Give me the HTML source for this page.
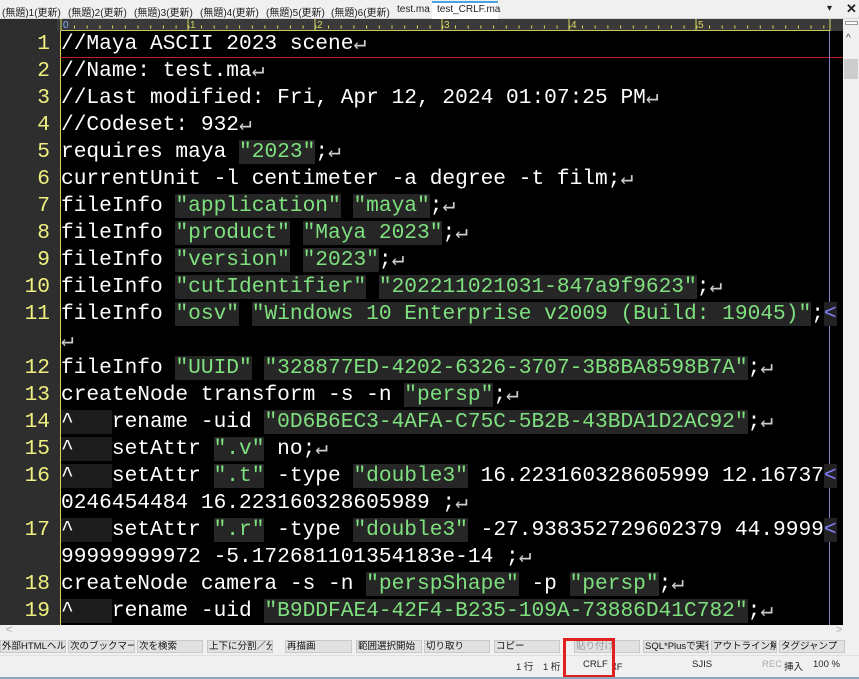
<!DOCTYPE html>
<html><head><meta charset="utf-8"><style>
*{margin:0;padding:0;box-sizing:border-box}
body{width:859px;height:679px;overflow:hidden;background:#f0f0f0;position:relative;font-family:"Liberation Sans","Noto Sans CJK JP",sans-serif}
.tabs{position:absolute;left:0;top:0;width:859px;height:19px;background:#f0f0f0;border-bottom:1px solid #d8d8d8}
.tab{position:absolute;top:4px;font-size:10px;color:#222;white-space:nowrap}
.act{position:absolute;left:432px;top:1px;width:66px;height:19px;background:#fff;border-top:2px solid #4aa3df}
.ruler{position:absolute;left:57px;top:19px;width:786px;height:12px;background:#3a3a3a}
.gut{position:absolute;left:0;top:19px;width:60px;height:606px;background:#2e2e2e}
.ed{position:absolute;left:60px;top:31px;width:783px;height:594px;background:#000;border-left:1px solid #d8d860}
.ln{position:absolute;left:0;width:50px;text-align:right;color:#f0f080;font-family:"Liberation Mono",monospace;font-size:21.2px;line-height:27px}
.r{position:absolute;left:61px;white-space:pre;color:#fff;font-family:"Liberation Mono",monospace;font-size:21.2px;line-height:27px}
.s{color:#7ee07e;background:#262626}
.m{color:#ccc}
.t{background:#1c1c1c}
.vs{position:absolute;left:843px;top:19px;width:16px;height:606px;background:#f0f0f0}
.fk{position:absolute;top:640px;height:13px;background:#e1e1e1;border:1px solid #c8c8c8;font-size:9.5px;line-height:11px;color:#111;white-space:nowrap;overflow:hidden;padding-left:1px}
.st{position:absolute;top:659px;font-size:9.5px;color:#222}
</style></head><body>
<div class="tabs"></div>
<div class="act"></div>
<span class="tab" style="left:2px">(無題)1(更新)</span>
<span class="tab" style="left:68px">(無題)2(更新)</span>
<span class="tab" style="left:134px">(無題)3(更新)</span>
<span class="tab" style="left:200px">(無題)4(更新)</span>
<span class="tab" style="left:266px">(無題)5(更新)</span>
<span class="tab" style="left:331px">(無題)6(更新)</span>
<span class="tab" style="left:397px">test.ma</span>
<span class="tab" style="left:437px">test_CRLF.ma</span>
<span class="tab" style="left:827px;top:3px">▾</span>
<span class="tab" style="left:846px;top:1px;font-size:13px;font-weight:bold">✕</span>
<div class="gut"></div>
<div class="ruler">
<svg width="786" height="12" style="position:absolute;left:0;top:0">
<line x1="4" y1="11.5" x2="773" y2="11.5" stroke="#c8c860"/>
<g stroke="#d8d860">
<line x1="4" y1="0" x2="4" y2="12"/><line x1="131" y1="0" x2="131" y2="12"/><line x1="258" y1="0" x2="258" y2="12"/><line x1="385" y1="0" x2="385" y2="12"/><line x1="512" y1="0" x2="512" y2="12"/><line x1="639" y1="0" x2="639" y2="12"/><line x1="773" y1="0" x2="773" y2="12"/>
</g>
<g fill="#d8d860" font-size="10" font-family="Liberation Sans">
<text x="6" y="9" fill="#7fb0ff">0</text><text x="133" y="9">1</text><text x="260" y="9">2</text><text x="387" y="9">3</text><text x="514" y="9">4</text><text x="641" y="9">5</text>
</g>
<g stroke="#d8d860" stroke-dasharray="1 11.7"><line x1="17" y1="8" x2="773" y2="8" stroke-width="3"/></g>
</svg></div>
<div class="ed"></div>
<div style="position:absolute;left:60px;top:57px;width:783px;height:1px;background:#c02020"></div>
<div style="position:absolute;left:829px;top:31px;width:1px;height:594px;background:#8080c0"></div>
<div class="vs"><div style="position:absolute;left:2px;top:2px;width:13px;height:4px;border:1px solid #999;background:#fff"></div><div style="position:absolute;left:3px;top:14px;font-size:10px;color:#444">^</div><div style="position:absolute;left:1px;top:40px;width:14px;height:20px;background:#cdcdcd"></div></div>

<div class="ln" style="top:31px">1</div><div class="ln" style="top:58px">2</div><div class="ln" style="top:85px">3</div><div class="ln" style="top:112px">4</div><div class="ln" style="top:139px">5</div><div class="ln" style="top:166px">6</div><div class="ln" style="top:193px">7</div><div class="ln" style="top:220px">8</div><div class="ln" style="top:247px">9</div><div class="ln" style="top:274px">10</div><div class="ln" style="top:301px">11</div><div class="ln" style="top:355px">12</div><div class="ln" style="top:382px">13</div><div class="ln" style="top:409px">14</div><div class="ln" style="top:436px">15</div><div class="ln" style="top:463px">16</div><div class="ln" style="top:517px">17</div><div class="ln" style="top:571px">18</div><div class="ln" style="top:598px">19</div>

<div class="r" style="top:31px">//Maya ASCII 2023 scene<span class="m">↵</span></div>
<div class="r" style="top:58px">//Name: test.ma<span class="m">↵</span></div>
<div class="r" style="top:85px">//Last modified: Fri, Apr 12, 2024 01:07:25 PM<span class="m">↵</span></div>
<div class="r" style="top:112px">//Codeset: 932<span class="m">↵</span></div>
<div class="r" style="top:139px">requires maya <span class="s">"2023"</span>;<span class="m">↵</span></div>
<div class="r" style="top:166px">currentUnit -l centimeter -a degree -t film;<span class="m">↵</span></div>
<div class="r" style="top:193px">fileInfo <span class="s">"application"</span> <span class="s">"maya"</span>;<span class="m">↵</span></div>
<div class="r" style="top:220px">fileInfo <span class="s">"product"</span> <span class="s">"Maya 2023"</span>;<span class="m">↵</span></div>
<div class="r" style="top:247px">fileInfo <span class="s">"version"</span> <span class="s">"2023"</span>;<span class="m">↵</span></div>
<div class="r" style="top:274px">fileInfo <span class="s">"cutIdentifier"</span> <span class="s">"202211021031-847a9f9623"</span>;<span class="m">↵</span></div>
<div class="r" style="top:301px">fileInfo <span class="s">"osv"</span> <span class="s">"Windows 10 Enterprise v2009 (Build: 19045)"</span>;<span style="color:#8080ff;background:#222">&lt;</span></div>
<div class="r" style="top:328px"><span class="m">↵</span></div>
<div class="r" style="top:355px">fileInfo <span class="s">"UUID"</span> <span class="s">"328877ED-4202-6326-3707-3B8BA8598B7A"</span>;<span class="m">↵</span></div>
<div class="r" style="top:382px">createNode transform -s -n <span class="s">"persp"</span>;<span class="m">↵</span></div>
<div class="r" style="top:409px"><span class="t">^   </span>rename -uid <span class="s">"0D6B6EC3-4AFA-C75C-5B2B-43BDA1D2AC92"</span>;<span class="m">↵</span></div>
<div class="r" style="top:436px"><span class="t">^   </span>setAttr <span class="s">".v"</span> no;<span class="m">↵</span></div>
<div class="r" style="top:463px"><span class="t">^   </span>setAttr <span class="s">".t"</span> -type <span class="s">"double3"</span> 16.223160328605999 12.16737<span style="color:#8080ff;background:#222">&lt;</span></div>
<div class="r" style="top:490px">0246454484 16.223160328605989 ;<span class="m">↵</span></div>
<div class="r" style="top:517px"><span class="t">^   </span>setAttr <span class="s">".r"</span> -type <span class="s">"double3"</span> -27.938352729602379 44.9999<span style="color:#8080ff;background:#222">&lt;</span></div>
<div class="r" style="top:544px">99999999972 -5.172681101354183e-14 ;<span class="m">↵</span></div>
<div class="r" style="top:571px">createNode camera -s -n <span class="s">"perspShape"</span> -p <span class="s">"persp"</span>;<span class="m">↵</span></div>
<div class="r" style="top:598px;height:27px;overflow:hidden"><span class="t">^   </span>rename -uid <span class="s">"B9DDFAE4-42F4-B235-109A-73886D41C782"</span>;<span class="m">↵</span></div>

<div style="position:absolute;left:0;top:625px;width:859px;height:13px;background:#f0f0f0"><span style="position:absolute;left:6px;top:-1px;font-size:11px;color:#aaa">&lt;</span><span style="position:absolute;left:836px;top:-1px;font-size:11px;color:#aaa">&gt;</span></div>
<div class="fk" style="left:0;width:66px">外部HTMLヘルプ</div>
<div class="fk" style="left:68px;width:67px">次のブックマーク</div>
<div class="fk" style="left:137px;width:66px">次を検索</div>
<div class="fk" style="left:207px;width:66px">上下に分割／分</div>
<div class="fk" style="left:285px;width:67px">再描画</div>
<div class="fk" style="left:356px;width:66px">範囲選択開始</div>
<div class="fk" style="left:424px;width:66px">切り取り</div>
<div class="fk" style="left:494px;width:66px">コピー</div>
<div class="fk" style="left:574px;width:66px;color:#999">貼り付け</div>
<div class="fk" style="left:643px;width:66px">SQL*Plusで実行</div>
<div class="fk" style="left:711px;width:66px">アウトライン解析</div>
<div class="fk" style="left:779px;width:66px">タグジャンプ</div>
<div style="position:absolute;left:0;top:655px;width:859px;height:24px;background:#f0f0f0;border-top:1px solid #e0e0e0"></div>
<span class="st" style="left:516px">1 行</span><span class="st" style="left:543px">1 桁</span>
<span class="st" style="left:583px">CRLF</span><span class="st" style="left:612px">ｽF</span>
<span class="st" style="left:692px">SJIS</span>
<span class="st" style="left:762px;color:#aaa">REC</span><span class="st" style="left:784px">挿入</span><span class="st" style="left:813px">100 %</span>
<div style="position:absolute;left:563px;top:638px;width:52px;height:40px;border:3px solid #e02020"></div>
<div style="position:absolute;left:0;top:677px;width:859px;height:2px;background:#8aa8c0"></div>
</body></html>
